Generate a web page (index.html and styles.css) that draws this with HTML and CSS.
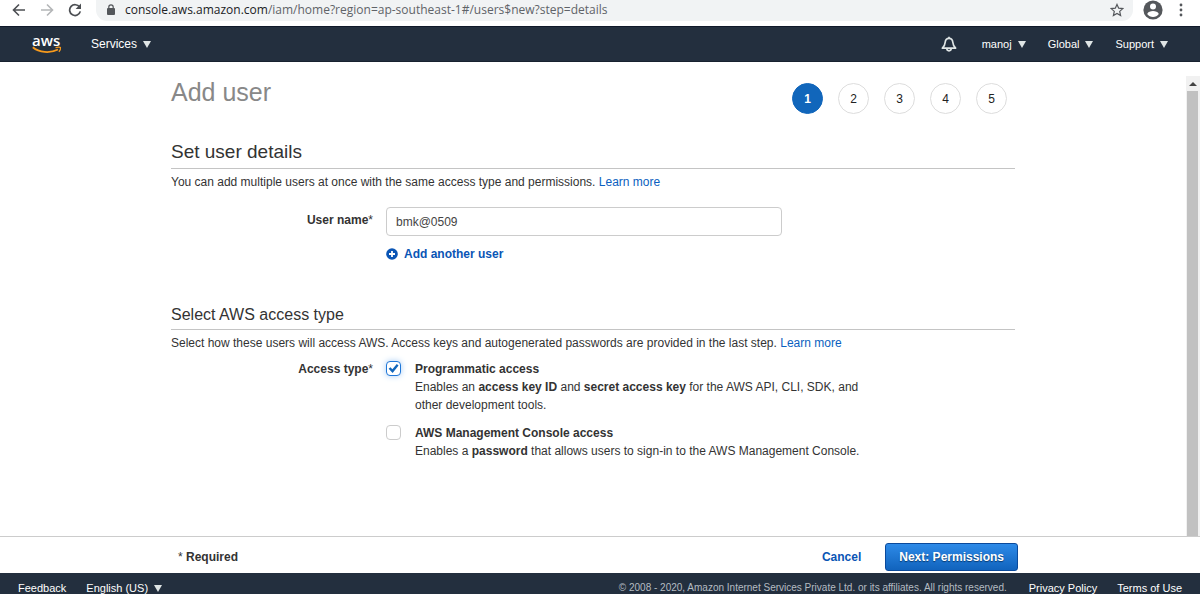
FILE: index.html
```
<!DOCTYPE html>
<html lang="en">

<head>
    <meta charset="utf-8">
    <title>Add user</title>
    <link rel="stylesheet" href="styles.css">
</head>

<body>
    <div class="browser-bar">
        <button class="icon-button" aria-label="Back">
            <svg width="14" height="14" viewBox="0 0 14 14" fill="none" stroke="#4c4f53" stroke-width="1.6"><path d="M13 7H2M7 1.5L1.5 7L7 12.5"/></svg>
        </button>
        <button class="icon-button" aria-label="Forward">
            <svg width="14" height="14" viewBox="0 0 14 14" fill="none" stroke="#b4b6b8" stroke-width="1.6"><path d="M1 7H12M7 1.5L12.5 7L7 12.5"/></svg>
        </button>
        <button class="icon-button" aria-label="Reload">
            <svg width="14" height="14" viewBox="0 0 14 14"><path d="M11.6 4.2A5.4 5.4 0 1 0 12.3 8.4" fill="none" stroke="#4c4f53" stroke-width="1.7"/><path d="M13 .6V6H7.6z" fill="#4c4f53"/></svg>
        </button>
        <div class="address">
            <svg width="10" height="12" viewBox="0 0 10 12"><rect x="1" y="4" width="8" height="7" rx="1" fill="#54575b"/><path d="M2.8 5V3a2.2 2.2 0 0 1 4.4 0v2" fill="none" stroke="#54575b" stroke-width="1.2"/></svg>
            <span class="url"><b>console.aws.amazon.com</b>/iam/home?region=ap-southeast-1#/users$new?step=details</span>
            <button class="icon-button" aria-label="Bookmark">
                <svg width="14" height="14" viewBox="0 0 14 14" fill="none" stroke="#54575b" stroke-width="1.2"><path d="M7 1.4l1.700 3.800 4.100.4-3.100 2.800.9 4.100L7 10.400l-3.600 2.100.9-4.100-3.100-2.800 4.100-.4z"/></svg>
            </button>
        </div>
        <button class="icon-button" aria-label="Profile">
            <svg width="20" height="20" viewBox="0 0 20 20"><circle cx="10" cy="10" r="9.600" fill="#54575b"/><circle cx="10" cy="6.500" r="3" fill="#fff"/><path d="M4.200 14c.8-2.200 3.400-3 5.800-3s5 .8 5.800 3c-1.300 1.900-3.500 2.900-5.800 2.900s-4.500-1-5.800-2.900z" fill="#fff"/></svg>
        </button>
        <button class="icon-button menu-dots" aria-label="Menu">
            <svg width="4" height="14" viewBox="0 0 4 14" fill="#54575b"><circle cx="2" cy="2" r="1.400"/><circle cx="2" cy="7" r="1.400"/><circle cx="2" cy="12" r="1.400"/></svg>
        </button>
    </div>

    <nav class="navbar">
        <a href="#" class="logo">
            <span>aws</span>
            <svg width="30" height="9" viewBox="0 0 30 9"><path d="M.8 2.300C7 7.600 18 8.700 26 4.500" fill="none" stroke="#f79a1c" stroke-width="1.800"/><path d="M23.500 2.800C25.500 1.800 28 1.900 28.500 2.500c.3 1.400-.5 3-1.600 4.300" fill="none" stroke="#f79a1c" stroke-width="1.200"/></svg>
        </a>
        <button class="nav-item services">Services <i class="caret"></i></button>
        <button class="nav-item bell" aria-label="Notifications">
            <svg width="16" height="16" viewBox="0 0 16 16" fill="none" stroke="#dfe5e5" stroke-width="1.700" stroke-linejoin="round"><path d="M1.400 12.200C3.600 10 4 8.500 4.200 6.200 4.400 3.800 6 2.300 8 2.300s3.600 1.500 3.800 3.900c.2 2.300.6 3.800 2.800 6z"/><path d="M8 .8v1.500M5.800 12.600a2.200 2.200 0 0 0 4.400 0"/></svg>
        </button>
        <button class="nav-item">manoj <i class="caret"></i></button>
        <button class="nav-item">Global <i class="caret"></i></button>
        <button class="nav-item">Support <i class="caret"></i></button>
    </nav>

    <div class="page">
        <main class="content">
            <header class="title-row">
                <h1>Add user</h1>
                <ol class="steps">
                    <li class="current">1</li>
                    <li>2</li>
                    <li>3</li>
                    <li>4</li>
                    <li>5</li>
                </ol>
            </header>

            <section class="details">
                <h2>Set user details</h2>
                <p>You can add multiple users at once with the same access type and permissions. <a href="#">Learn more</a></p>
                <div class="form-row">
                    <label class="row-label name-label" for="username">User name<span>*</span></label>
                    <div>
                        <input class="text-input" id="username" type="text" value="bmk@0509">
                        <button class="add-user">
                            <svg width="12" height="12" viewBox="0 0 12 12"><circle cx="6" cy="6" r="5.800" fill="#0a55b5"/><path d="M6 3v6M3 6h6" stroke="#fff" stroke-width="1.800"/></svg>
                            Add another user
                        </button>
                    </div>
                </div>
            </section>

            <section>
                <h3>Select AWS access type</h3>
                <p>Select how these users will access AWS. Access keys and autogenerated passwords are provided in the last step. <a href="#">Learn more</a></p>
                <div class="form-row access-row">
                    <div class="row-label">Access type<span>*</span></div>
                    <div class="options">
                        <div class="option">
                            <input type="checkbox" id="programmatic" checked>
                            <div>
                                <label for="programmatic">Programmatic access</label>
                                <p>Enables an <b>access key ID</b> and <b>secret access key</b> for the AWS API, CLI, SDK, and other development tools.</p>
                            </div>
                        </div>
                        <div class="option">
                            <input type="checkbox" id="console">
                            <div>
                                <label for="console">AWS Management Console access</label>
                                <p>Enables a <b>password</b> that allows users to sign-in to the AWS Management Console.</p>
                            </div>
                        </div>
                    </div>
                </div>
            </section>
        </main>
        <div class="scrollbar">
            <i class="arrow-up"></i>
            <div class="thumb"></div>
        </div>
    </div>

    <div class="action-bar">
        <div class="actions">
            <span class="required"><span>*</span> Required</span>
            <button class="cancel">Cancel</button>
            <button class="next">Next: Permissions</button>
        </div>
    </div>

    <footer class="footer">
        <a href="#">Feedback</a>
        <button class="language">English (US) <i class="caret"></i></button>
        <span class="copyright">© 2008 - 2020, Amazon Internet Services Private Ltd. or its affiliates. All rights reserved.</span>
        <a href="#">Privacy Policy</a>
        <a href="#">Terms of Use</a>
    </footer>
</body>

</html>
```
FILE: styles.css
```
* {
    box-sizing: border-box;
}

body {
    display: flex;
    flex-direction: column;
    height: 100vh;
    margin: 0;
    overflow: hidden;
    background: #fff;
    color: #333;
    font-family: "Liberation Sans", Arial, sans-serif;
    font-size: 12px;
    line-height: 18px;
}

h1, h2, h3, p, ol {
    margin: 0;
    font-weight: normal;
}

a {
    color: #0b5fc0;
    text-decoration: none;
}

button {
    padding: 0;
    border: none;
    background: none;
    font-family: inherit;
    cursor: pointer;
}

svg {
    display: block;
    flex: none;
}

.browser-bar {
    display: flex;
    align-items: center;
    gap: 14px;
    height: 26px;
    padding: 0 17px 6px 12px;
}

.address {
    display: flex;
    flex: 1;
    align-items: center;
    gap: 9px;
    height: 22px;
    margin-right: -4px;
    padding: 0 9px 0 10px;
    border-radius: 0 0 11px 11px;
    background: #f1f3f4;
}

.menu-dots {
    margin-left: 2px;
}

.url {
    flex: 1;
    color: #5f6368;
    font-family: "Open Sans", sans-serif;
    font-size: 12px;
}

.url b {
    color: #202124;
    font-weight: normal;
}

.navbar {
    display: flex;
    align-items: center;
    gap: 22px;
    height: 36px;
    padding: 0 32px;
    border-top: 1px solid #10192a;
    border-bottom: 1px solid #18222f;
    background: #232f3e;
}

.logo {
    margin-right: 7px;
    color: #fff;
    font-family: "Open Sans", sans-serif;
    font-size: 15px;
    font-weight: 600;
    line-height: 10px;
}

.logo span {
    display: block;
}

.nav-item {
    display: flex;
    align-items: center;
    gap: 6px;
    color: #fff;
    font-size: 11px;
}

.services {
    margin-right: auto;
    font-size: 12px;
}

.bell {
    margin-right: 3px;
}

.caret {
    border: 4px solid transparent;
    border-top: 7px solid #dfe5e5;
    border-bottom: 0;
}

.page {
    display: flex;
    flex: 1;
    min-height: 0;
    padding-top: 14px;
}

.content {
    flex: 0 1 844px;
    margin: 0 auto;
}

.title-row {
    display: flex;
    justify-content: space-between;
    height: 61px;
}

h1 {
    color: #888;
    font-size: 25px;
    line-height: 32px;
}

.steps {
    display: flex;
    gap: 15px;
    padding: 7px 8px 0 0;
    list-style: none;
}

.steps li {
    width: 31px;
    height: 31px;
    border: 1px solid #ddd;
    border-radius: 50%;
    color: #222;
    font-size: 12px;
    line-height: 30px;
    text-align: center;
}

.steps .current {
    border-color: #1166bb;
    background: #1166bb;
    color: #fff;
    font-weight: bold;
}

h2, h3 {
    margin-bottom: 4px;
    border-bottom: 1px solid #c4c4c4;
}

h2 {
    padding-bottom: 2px;
    font-size: 19px;
    line-height: 29px;
}

h3 {
    font-size: 16px;
    line-height: 28px;
}

.details {
    height: 164px;
}

.form-row {
    display: grid;
    grid-template-columns: 202px 1fr;
    gap: 13px;
    margin-top: 16px;
}

.access-row {
    margin-top: 8px;
}

.row-label {
    font-weight: bold;
    text-align: right;
}

.row-label span,
.required span {
    font-weight: normal;
}

.name-label {
    padding-top: 4px;
}

.text-input {
    display: block;
    width: 396px;
    height: 29px;
    padding: 0 9px;
    border: 1px solid #ccc;
    border-radius: 4px;
    color: #444;
    font-family: inherit;
    font-size: 12px;
}

.add-user {
    display: flex;
    align-items: center;
    gap: 6px;
    margin-top: 9px;
    color: #0a55b5;
    font-size: 12px;
    font-weight: bold;
    line-height: 18px;
}

.options {
    display: grid;
    gap: 10px;
}

.option {
    display: flex;
    gap: 14px;
    width: 488px;
}

.option label {
    font-weight: bold;
}

input[type="checkbox"] {
    appearance: none;
    flex: none;
    display: grid;
    justify-content: center;
    align-content: start;
    width: 15px;
    height: 15px;
    margin: 1px 0;
    border: 1px solid #ccc;
    border-radius: 4px;
    background: #fff;
}

input[type="checkbox"]:checked {
    border-color: #1f77d8;
    box-shadow: 0 0 6px #a9cdf5;
}

input[type="checkbox"]:checked::before {
    content: "";
    width: 11px;
    height: 11px;
    margin-top: 1px;
    background: #1166bb;
    clip-path: polygon(6% 52%, 22% 38%, 40% 56%, 80% 8%, 96% 22%, 42% 90%);
}

.scrollbar {
    display: flex;
    flex-direction: column;
    align-items: center;
    width: 14px;
    padding-right: 1px;
    background: #f1f1f1;
}

.arrow-up {
    margin: 6px 0 5px;
    border: 4px solid transparent;
    border-top: 0;
    border-bottom: 4px solid #444;
}

.thumb {
    flex: 1;
    width: 11px;
    background: #c1c1c1;
}

.action-bar {
    height: 37px;
    padding-right: 14px;
    border-top: 1px solid #ccc;
}

.actions {
    display: flex;
    align-items: center;
    max-width: 844px;
    height: 39px;
    margin: 0 auto;
    padding-left: 7px;
}

.required {
    margin-right: auto;
    font-weight: bold;
}

.cancel {
    margin-right: 24px;
    color: #0a55b5;
    font-size: 12px;
    font-weight: bold;
}

.next {
    height: 28px;
    margin-right: -3px;
    padding: 0 13px;
    border: 1px solid #0a4a9c;
    border-radius: 3px;
    background: linear-gradient(#2d8ae8, #1163bd);
    color: #fff;
    font-size: 12px;
    font-weight: bold;
    text-shadow: 0 1px 1px #07396f;
}

.footer {
    display: flex;
    align-items: center;
    gap: 20px;
    flex: none;
    height: 21px;
    padding: 9px 18px 0;
    overflow: hidden;
    background: #232f3e;
}

.footer a,
.language {
    color: #fff;
    font-size: 11px;
}

.language {
    display: flex;
    align-items: center;
    gap: 6px;
}

.copyright {
    margin-left: auto;
    margin-right: 2px;
    color: #b5bcc2;
    font-size: 10px;
}
```
